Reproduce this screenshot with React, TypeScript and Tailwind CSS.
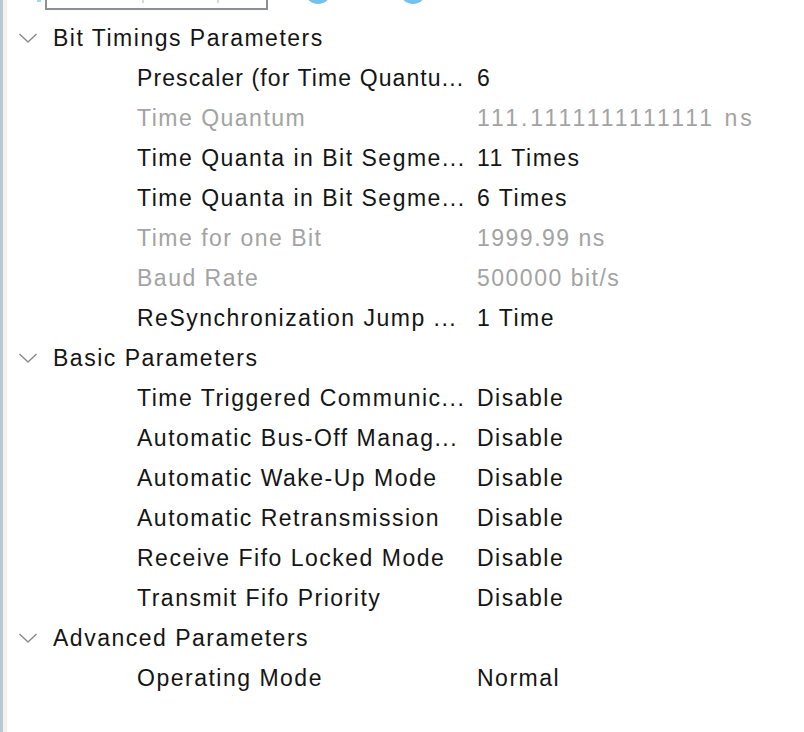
import React from "react";

type Row = { label: string; value: string; muted?: boolean; wide?: boolean; tight?: boolean };
type Group = { title: string; rows: Row[] };

const groups: Group[] = [
  {
    title: "Bit Timings Parameters",
    rows: [
      { label: "Prescaler (for Time Quantu...", value: "6", tight: true },
      { label: "Time Quantum", value: "111.1111111111111 ns", muted: true, wide: true },
      { label: "Time Quanta in Bit Segme...", value: "11 Times" },
      { label: "Time Quanta in Bit Segme...", value: "6 Times" },
      { label: "Time for one Bit", value: "1999.99 ns", muted: true },
      { label: "Baud Rate", value: "500000 bit/s", muted: true },
      { label: "ReSynchronization Jump ...", value: "1 Time" },
    ],
  },
  {
    title: "Basic Parameters",
    rows: [
      { label: "Time Triggered Communic...", value: "Disable" },
      { label: "Automatic Bus-Off Manag...", value: "Disable" },
      { label: "Automatic Wake-Up Mode", value: "Disable" },
      { label: "Automatic Retransmission", value: "Disable" },
      { label: "Receive Fifo Locked Mode", value: "Disable" },
      { label: "Transmit Fifo Priority", value: "Disable" },
    ],
  },
  {
    title: "Advanced Parameters",
    rows: [{ label: "Operating Mode", value: "Normal" }],
  },
];

function Chevron() {
  return (
    <svg width="20" height="12" viewBox="0 0 20 12" className="shrink-0">
      <path d="M1.5 2 L10 10 L18.5 2" fill="none" stroke="#8c8c8c" strokeWidth="1.5" />
    </svg>
  );
}

export default function App() {
  return (
    <div
      className="w-[804px] h-[732px] bg-white flex overflow-hidden text-[23px] tracking-[1.5px]"
      style={{ fontFamily: '"Liberation Sans", Arial, sans-serif' }}
    >
      <div className="w-[3px] bg-[#b9c8d2] shrink-0" />
      <div className="w-[4px] bg-[#f1f1f1] shrink-0" />
      <div className="flex-1 flex flex-col relative">
        {/* top partial toolbar */}
        <div className="h-[18px] relative">
          <div className="absolute left-[30px] top-0 w-[4px] h-[2px] bg-[#9fd6f2]" />
          <div className="absolute left-[38px] top-[-20px] w-[223px] h-[30px] border-2 border-[#8c9094] bg-white" />
          <div className="absolute left-[135px] top-0 w-[2px] h-[3px] bg-[#d8d8d8]" />
          <div className="absolute left-[210px] top-0 w-[2px] h-[3px] bg-[#d8d8d8]" />
          <div className="absolute left-[298px] top-[-22px] w-[26px] h-[26px] rounded-full bg-[#3aa7e6] opacity-70" />
          <div className="absolute left-[393px] top-[-22px] w-[26px] h-[26px] rounded-full bg-[#3aa7e6] opacity-70" />
        </div>
        {groups.map((g) => (
          <div key={g.title} className="flex flex-col">
            <div className="h-[40px] flex items-center text-[#151515]">
              <div className="w-[46px] flex justify-start pl-[11px]">
                <Chevron />
              </div>
              <span className="whitespace-nowrap">{g.title}</span>
            </div>
            {g.rows.map((r, i) => (
              <div
                key={i}
                className={`h-[40px] flex items-center ${r.muted ? "text-[#a3a3a3]" : "text-[#151515]"}`}
              >
                <div className="w-[130px] shrink-0" />
                <div
                  className={`w-[340px] shrink-0 whitespace-nowrap overflow-hidden ${r.tight ? "tracking-[1.1px]" : ""}`}
                >
                  {r.label}
                </div>
                <div className={`whitespace-nowrap ${r.wide ? "tracking-[3px]" : ""}`}>{r.value}</div>
              </div>
            ))}
          </div>
        ))}
      </div>
    </div>
  );
}
